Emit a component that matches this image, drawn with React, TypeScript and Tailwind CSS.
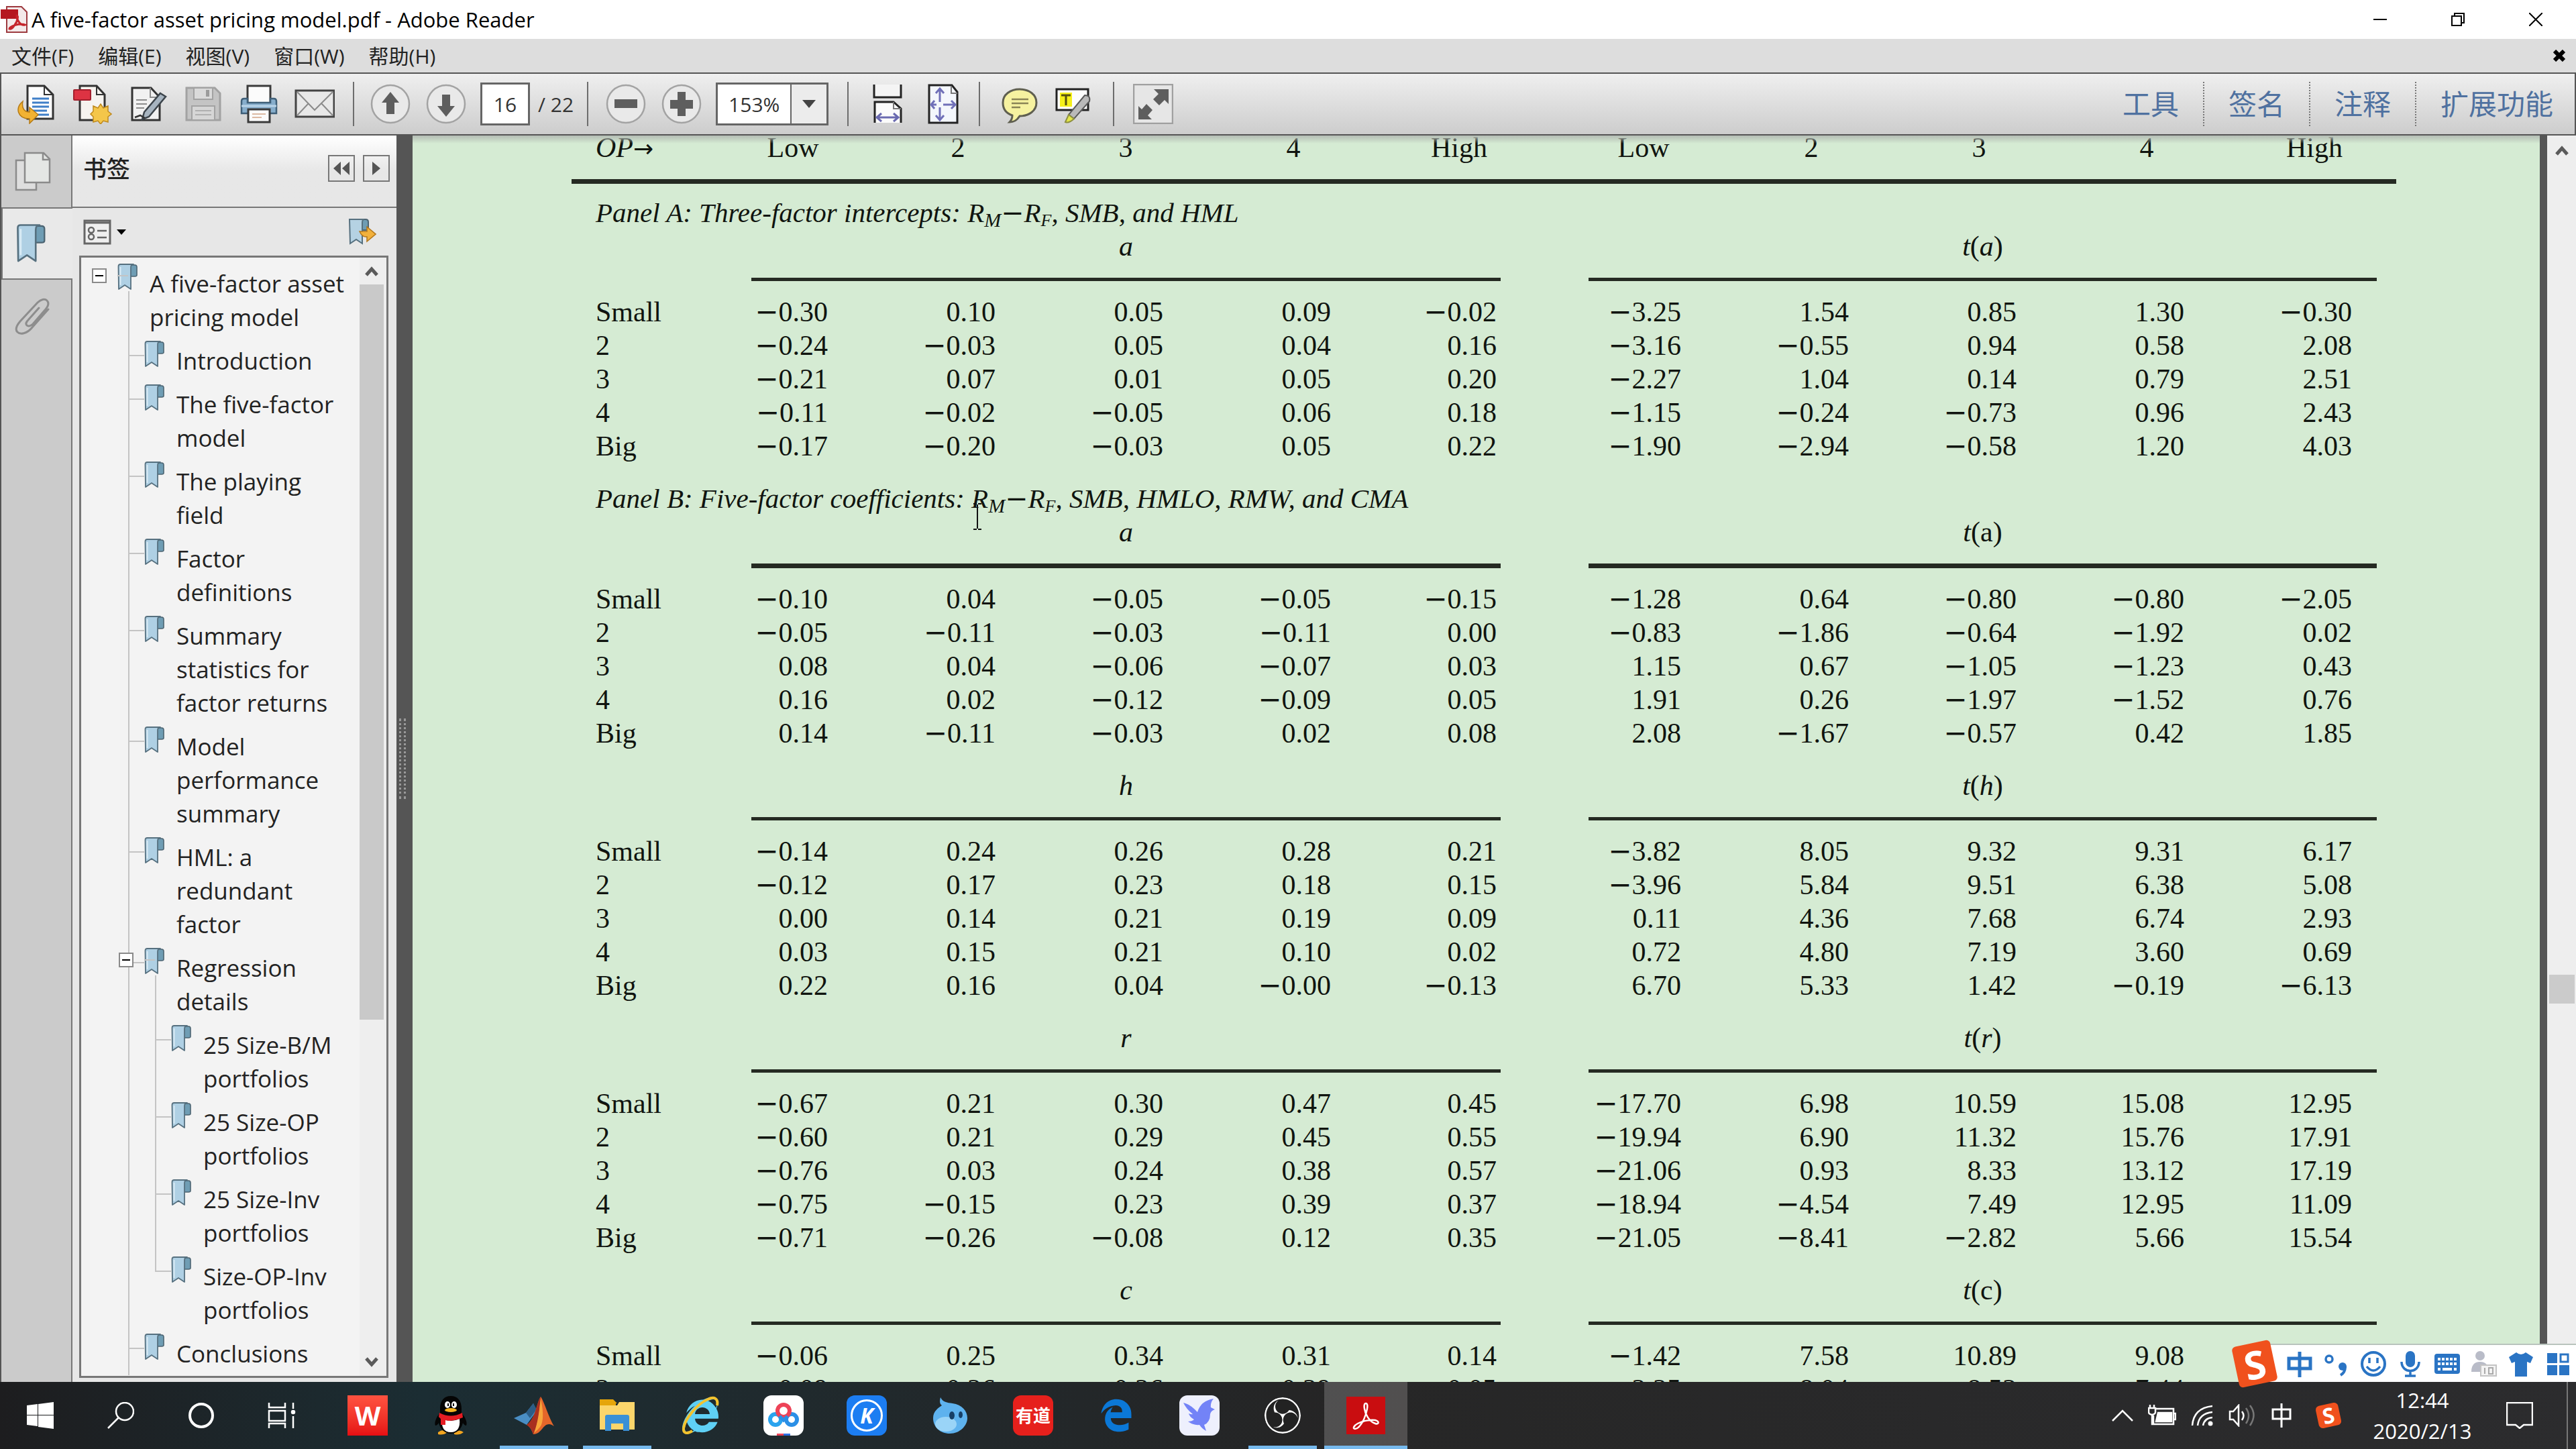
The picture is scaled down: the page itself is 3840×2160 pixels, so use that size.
import type { ReactNode } from "react";
import { FaEdgeLegacy, FaInternetExplorer } from "react-icons/fa";
import { SiObsstudio } from "react-icons/si";

/* ── Data ── */

const menus = ["文件(F)", "编辑(E)", "视图(V)", "窗口(W)", "帮助(H)"];

type Bookmark = { lines: string[]; children?: Bookmark[] };

const bookmarks: Bookmark[] = [
  {
    lines: ["A five-factor asset", "pricing model"],
    children: [
      { lines: ["Introduction"] },
      { lines: ["The five-factor", "model"] },
      { lines: ["The playing", "field"] },
      { lines: ["Factor", "definitions"] },
      { lines: ["Summary", "statistics for", "factor returns"] },
      { lines: ["Model", "performance", "summary"] },
      { lines: ["HML: a", "redundant", "factor"] },
      {
        lines: ["Regression", "details"],
        children: [
          { lines: ["25 Size-B/M", "portfolios"] },
          { lines: ["25 Size-OP", "portfolios"] },
          { lines: ["25 Size-Inv", "portfolios"] },
          { lines: ["Size-OP-Inv", "portfolios"] },
        ],
      },
      { lines: ["Conclusions"] },
    ],
  },
];

type Group = { left: ReactNode; right: ReactNode; thick?: boolean; rows: string[] };

const panelA: Group[] = [
  {
    left: <i>a</i>,
    right: <><i>t</i>(<i>a</i>)</>,
    rows: [
      "Small -0.30 0.10 0.05 0.09 -0.02 -3.25 1.54 0.85 1.30 -0.30",
      "2 -0.24 -0.03 0.05 0.04 0.16 -3.16 -0.55 0.94 0.58 2.08",
      "3 -0.21 0.07 0.01 0.05 0.20 -2.27 1.04 0.14 0.79 2.51",
      "4 -0.11 -0.02 -0.05 0.06 0.18 -1.15 -0.24 -0.73 0.96 2.43",
      "Big -0.17 -0.20 -0.03 0.05 0.22 -1.90 -2.94 -0.58 1.20 4.03",
    ],
  },
];

const panelB: Group[] = [
  {
    left: <i>a</i>,
    right: <><i>t</i>(a)</>,
    thick: true,
    rows: [
      "Small -0.10 0.04 -0.05 -0.05 -0.15 -1.28 0.64 -0.80 -0.80 -2.05",
      "2 -0.05 -0.11 -0.03 -0.11 0.00 -0.83 -1.86 -0.64 -1.92 0.02",
      "3 0.08 0.04 -0.06 -0.07 0.03 1.15 0.67 -1.05 -1.23 0.43",
      "4 0.16 0.02 -0.12 -0.09 0.05 1.91 0.26 -1.97 -1.52 0.76",
      "Big 0.14 -0.11 -0.03 0.02 0.08 2.08 -1.67 -0.57 0.42 1.85",
    ],
  },
  {
    left: <i>h</i>,
    right: <><i>t</i>(<i>h</i>)</>,
    rows: [
      "Small -0.14 0.24 0.26 0.28 0.21 -3.82 8.05 9.32 9.31 6.17",
      "2 -0.12 0.17 0.23 0.18 0.15 -3.96 5.84 9.51 6.38 5.08",
      "3 0.00 0.14 0.21 0.19 0.09 0.11 4.36 7.68 6.74 2.93",
      "4 0.03 0.15 0.21 0.10 0.02 0.72 4.80 7.19 3.60 0.69",
      "Big 0.22 0.16 0.04 -0.00 -0.13 6.70 5.33 1.42 -0.19 -6.13",
    ],
  },
  {
    left: <i>r</i>,
    right: <><i>t</i>(<i>r</i>)</>,
    rows: [
      "Small -0.67 0.21 0.30 0.47 0.45 -17.70 6.98 10.59 15.08 12.95",
      "2 -0.60 0.21 0.29 0.45 0.55 -19.94 6.90 11.32 15.76 17.91",
      "3 -0.76 0.03 0.24 0.38 0.57 -21.06 0.93 8.33 13.12 17.19",
      "4 -0.75 -0.15 0.23 0.39 0.37 -18.94 -4.54 7.49 12.95 11.09",
      "Big -0.71 -0.26 -0.08 0.12 0.35 -21.05 -8.41 -2.82 5.66 15.54",
    ],
  },
  {
    left: <i>c</i>,
    right: <><i>t</i>(c)</>,
    rows: [
      "Small -0.06 0.25 0.34 0.31 0.14 -1.42 7.58 10.89 9.08",
      "2 -0.09 0.26 0.26 0.29 0.05 -2.25 8.04 8.53 7.44",
    ],
  },
];

/* ── Small shared pieces ── */

function BookmarkIcon({ className }: { className: string }) {
  return (
    <svg className={className} viewBox="0 0 30 40" fill="none">
      <path d="M17 2h9q3 0 3 3v12q0 2-3 2h-7V5z" fill="#6f9db4" stroke="#4c6472" strokeWidth="1.6" />
      <path d="M1.500 4q0-3 3-3H24q-4 0-4 5v32l-9-6-9 6z" fill="#afd0e4" stroke="#56707f" strokeWidth="1.800" strokeLinejoin="round" />
      <path d="M4.500 5v27" stroke="#d9ebf5" strokeWidth="2" />
    </svg>
  );
}

function Chevron({ up = false }: { up?: boolean }) {
  return (
    <svg className="h-4 w-5" viewBox="0 0 20 16" fill="none" stroke="#5a5a5a" strokeWidth="5">
      <path d={up ? "M2 14l8-9 8 9" : "M2 2l8 9 8-9"} />
    </svg>
  );
}

function SogouMark({ className }: { className: string }) {
  return (
    <span className={`flex shrink-0 -rotate-12 items-center justify-center rounded-md bg-[#f0511d] font-bold text-white ${className}`}>
      S
    </span>
  );
}

const Separator = () => <div className="h-[66px] w-[2px] bg-[#6d6d6d]" />;

/* ── Toolbar ── */

function ToolButton({ label, children }: { label: string; children: ReactNode }) {
  return (
    <button aria-label={label} className="flex h-[80px] w-[83px] items-center justify-center">
      <svg className="h-[60px] w-[60px]" viewBox="0 0 60 60" fill="none">{children}</svg>
    </button>
  );
}

function RoundIcon({ children }: { children: ReactNode }) {
  return (
    <>
      <circle cx="30" cy="30" r="28" fill="#e9e9e9" stroke="#a3a3a3" strokeWidth="2.500" />
      <g fill="#5e5e5e">{children}</g>
    </>
  );
}

function Toolbar() {
  return (
    <div className="flex h-[94px] shrink-0 items-center border-2 border-[#555] bg-linear-to-b from-[#efefef] to-[#cdcdcd] pl-2.5">
      <ToolButton label="打开">
        <path d="M17 3h25l13 13v36H17z" fill="#fdfdfd" stroke="#333" strokeWidth="3" />
        <path d="M42 3v13h13" stroke="#333" strokeWidth="2" />
        <path d="M24 22h25M24 28h25M24 34h25M24 40h22M30 46h19" stroke="#3f7fc8" strokeWidth="3" />
        <path d="M10 26C-2 36 2 52 20 52v7l13-13-13-11v7c-8 0-12-6-10-16z" fill="#f2b233" stroke="#b57a14" strokeWidth="1.500" />
      </ToolButton>
      <ToolButton label="创建 PDF">
        <path d="M12 3h25l12 13v38H12z" fill="#f6f3ef" stroke="#333" strokeWidth="3" />
        <path d="M37 3v13h12" stroke="#333" strokeWidth="2" />
        <rect x="3" y="9" width="25" height="15" rx="1" fill="#dd3343" stroke="#a31f2d" strokeWidth="2" />
        <path d="M43 30l4 6 7-3v8l5 4-5 4v8l-7-2-4 5-4-5-7 2v-8l-4-4 4-4v-8l7 3z" fill="#f4c64a" stroke="#c08a1d" strokeWidth="1.500" />
      </ToolButton>
      <ToolButton label="编辑">
        <path d="M7 6h28l13 14v34H7z" fill="#f1f1f1" stroke="#333" strokeWidth="3" />
        <path d="M34 6v14h13M13 24h16M13 30h16M13 36h12" stroke="#8d8d8d" strokeWidth="2" />
        <path d="M49 14l8 5-25 30-10 4 3-11z" fill="#a7b4c0" stroke="#3c444b" strokeWidth="2.500" />
        <path d="M11 50l8-3 7 4" stroke="#333" strokeWidth="2.500" />
      </ToolButton>
      <ToolButton label="保存">
        <path d="M5 6h42l8 8v40H5z" fill="#c4c4c4" stroke="#a2a2a2" strokeWidth="3" />
        <path d="M16 6h28v17H16z" fill="#dadada" stroke="#a2a2a2" strokeWidth="2" />
        <path d="M34 9h5v10h-5z" fill="#9b9b9b" />
        <path d="M13 33h34v21H13z" fill="#d6d6d6" stroke="#a2a2a2" strokeWidth="2" />
        <path d="M18 40h24M18 46h24" stroke="#b0b0b0" strokeWidth="2" />
      </ToolButton>
      <ToolButton label="打印">
        <path d="M13 3h34v26H13z" fill="#fbfbfb" stroke="#3a3a3a" strokeWidth="3" />
        <path d="M4 26q0-4 4-4h5v6h34v-6h5q4 0 4 4v18H4z" fill="#86adcb" stroke="#3f5f78" strokeWidth="2.500" />
        <path d="M4 33h52" stroke="#b9d4e8" strokeWidth="3" />
        <path d="M14 38h32v19H14z" fill="#fbfbfb" stroke="#3a3a3a" strokeWidth="3" />
        <path d="M20 45h20M20 50h14" stroke="#dcb9a3" strokeWidth="2" />
      </ToolButton>
      <ToolButton label="邮件">
        <path d="M2 10h57v39H2z" fill="#e8e8e8" stroke="#444" strokeWidth="3" />
        <path d="M4 12l26 27 27-27M4 47l17-18M57 47L40 29" stroke="#8b8b8b" strokeWidth="2" />
      </ToolButton>

      <div className="ml-4 mr-3"><Separator /></div>
      <ToolButton label="上一页">
        <RoundIcon><path d="M30 12l13 16h-7v17H24V28h-7z" /></RoundIcon>
      </ToolButton>
      <ToolButton label="下一页">
        <RoundIcon><path d="M30 49l13-16h-7V16H24v17h-7z" /></RoundIcon>
      </ToolButton>
      <label className="ml-2.5 flex items-center gap-3 text-[30px] text-[#333]">
        <input
          aria-label="页码"
          defaultValue="16"
          className="h-[64px] w-[74px] border-[3px] border-[#666] bg-white text-center outline-none"
        />
        <span>/ 22</span>
      </label>

      <div className="ml-5 mr-3.5"><Separator /></div>
      <ToolButton label="缩小">
        <RoundIcon><path d="M13 23h34v13H13z" /></RoundIcon>
      </ToolButton>
      <ToolButton label="放大">
        <RoundIcon><path d="M24 12h12v12h11v13H36v11H24V37H13V24h11z" /></RoundIcon>
      </ToolButton>
      <div className="relative ml-2.5">
        <select
          aria-label="缩放"
          className="h-[64px] w-[168px] appearance-none border-[3px] border-[#666] bg-white pl-4 text-[30px] text-[#333] outline-none"
        >
          <option>153%</option>
        </select>
        <div className="pointer-events-none absolute inset-y-[3px] right-[3px] flex w-[54px] items-center justify-center border-l-2 border-[#666] bg-[#ececec]">
          <svg className="h-3 w-5" viewBox="0 0 20 12"><path d="M0 0h20L10 12z" fill="#444" /></svg>
        </div>
      </div>

      <div className="ml-7 mr-4"><Separator /></div>
      <ToolButton label="适合宽度">
        <path d="M10 1v19h40V1" fill="#f4f4f4" stroke="#222" strokeWidth="3" />
        <path d="M11 58V27h28l11 10v21" fill="#fbfbfb" stroke="#222" strokeWidth="3" />
        <path d="M39 27v10h11" stroke="#777" strokeWidth="2" />
        <path d="M14 50h32M21 44l-7 6 7 6M39 44l7 6-7 6" stroke="#6a6ab0" strokeWidth="3" />
      </ToolButton>
      <ToolButton label="适合页面">
        <path d="M9 2h34l8 10v46H9z" fill="#f4f7fc" stroke="#222" strokeWidth="3" />
        <path d="M42 3v11h9" stroke="#777" strokeWidth="2" />
        <path d="M25 27V7m-6 7l6-7 6 7M25 35v19m-6-7l6 7 6-7M20 31h-9m6-6l-5 6 5 6M30 31h18m-6-6l6 6-6 6" stroke="#7070b8" strokeWidth="3" />
      </ToolButton>

      <div className="ml-3 mr-4"><Separator /></div>
      <ToolButton label="批注">
        <path d="M31 8c14 0 25 8 25 20S45 48 31 48c-5 8-10 9-15 9 3-3 4-6 4-10C11 44 6 37 6 28 6 16 17 8 31 8z" fill="#f6f2a0" stroke="#5f5f50" strokeWidth="3" />
        <path d="M19 23h25M19 29h25M19 35h13" stroke="#8a8456" strokeWidth="2.500" />
      </ToolButton>
      <ToolButton label="高亮">
        <path d="M3 8h47v31H3z" fill="#fdfdfd" stroke="#222" strokeWidth="3" />
        <path d="M8 13h18v21H8z" fill="#f5f01a" />
        <path d="M10 17h14M17 17v15" stroke="#555010" strokeWidth="3" />
        <path d="M45 17q9 0 7 9L29 52l-8-6z" fill="#b9b9b9" stroke="#5a5a5a" strokeWidth="2" />
        <path d="M21 46l8 6q-7 7-13 5z" fill="#e3e64a" stroke="#8e9040" strokeWidth="2" />
      </ToolButton>

      <div className="mx-4"><Separator /></div>
      <ToolButton label="阅读模式">
        <path d="M1 1h58v58H1z" fill="#e6e6e6" stroke="#a0a0a0" strokeWidth="2.500" />
        <path d="M31 8h22v22l-6-6-8 8-9-9 8-8zM8 53h20l-6-6 7-8-9-9-7 8-5-5z" fill="#5e5e5e" />
      </ToolButton>

      <div className="ml-auto flex text-[42px] leading-[66px] text-[#4f71a0]">
        <button className="px-9">工具</button>
        <button className="border-l-2 border-dotted border-[#777] px-9">签名</button>
        <button className="border-l-2 border-dotted border-[#777] px-9">注释</button>
        <button className="border-l-2 border-dotted border-[#777] pl-9 pr-8">扩展功能</button>
      </div>
    </div>
  );
}

/* ── Bookmarks pane ── */

function Tree({ items, nested = false, open = false }: { items: Bookmark[]; nested?: boolean; open?: boolean }) {
  return (
    <ul className={nested ? "ml-4" : "pl-[30px]"}>
      {items.map((item, i) => {
        const last = i === items.length - 1 && !open;
        return (
          <li key={item.lines[0]} className="relative pl-6">
            {nested && (
              <>
                <span className={`absolute left-0 top-0 w-[2px] bg-[#c4c4c4] ${last ? "h-6" : "h-full"}`} />
                <span className="absolute left-0 top-6 h-[2px] w-6 bg-[#c4c4c4]" />
              </>
            )}
            {item.children && (
              <button
                aria-label="折叠"
                className="absolute -left-3.5 top-2.5 z-10 flex h-[22px] w-[22px] items-center justify-center border-2 border-[#8a8a8a] bg-white"
              >
                <span className="h-[2px] w-3 bg-black" />
              </button>
            )}
            <div className="relative flex gap-[18px] pb-[7px] pt-[3px]">
              {item.children && (
                <>
                  <span className="absolute bottom-0 left-4 top-11 w-[2px] bg-[#c4c4c4]" />
                  <span className="absolute left-0 top-5 h-[2px] w-4 bg-[#c4c4c4]" />
                </>
              )}
              <BookmarkIcon className="h-[40px] w-[30px] shrink-0" />
              <a href="#bookmark" className="whitespace-nowrap pt-[5px]">
                {item.lines.map((line) => (
                  <span key={line} className="block">{line}</span>
                ))}
              </a>
            </div>
            {item.children && <Tree items={item.children} nested open={!nested} />}
          </li>
        );
      })}
    </ul>
  );
}

function Sidebar() {
  return (
    <aside className="flex shrink-0">
      <div className="w-[108px] border-l-2 border-[#555] bg-[#cbcbcb]">
        <button aria-label="页面" className="flex h-[107px] w-full items-center border-r-2 border-[#777] pl-5">
          <svg className="h-[60px] w-[54px]" viewBox="0 0 54 60" fill="none" stroke="#8b8b8b" strokeWidth="2.500">
            <path d="M2 13h30v44H2z" fill="#dedede" />
            <path d="M15 2h28l9 9v35H15z" fill="#e4e6e4" />
            <path d="M42 2v10h10" />
          </svg>
        </button>
        <button aria-label="书签" className="flex h-[108px] w-full items-center border-y-2 border-l-2 border-[#777] bg-[#e9e9e9] pl-5">
          <BookmarkIcon className="h-[58px] w-[44px]" />
        </button>
        <div className="h-full border-r-2 border-[#777]">
          <button aria-label="附件" className="flex h-[107px] w-full items-center pl-5">
            <svg className="h-[56px] w-[52px]" viewBox="0 0 52 56" fill="none" stroke="#8d8d8d" strokeWidth="3" strokeLinecap="round">
              <path d="M50 18L26 45c-8 10-18 11-22 7s-1-10 4-16L34 8c5-5 11-6 14-3s2 8-2 13L27 40c-3 3-7 4-9 2s-1-5 2-8l16-18" />
            </svg>
          </button>
        </div>
      </div>

      <div className="flex w-[483px] flex-col bg-[#e7e7e7]">
        <div className="flex h-[108px] shrink-0 items-start justify-between border-b-2 border-[#777] bg-linear-to-b from-white to-[#e7e7e7] to-50% pl-4 pr-2.5 pt-[26px]">
          <h2 className="text-[35px] font-medium leading-[48px] text-[#222]">书签</h2>
          <div className="flex gap-3 pt-[3px]">
            <button aria-label="折叠面板" className="flex h-10 w-10 items-center justify-center border-2 border-[#777]">
              <svg className="h-5 w-6" viewBox="0 0 24 20" fill="#555"><path d="M11 0v20L0 10zM24 0v20L13 10z" /></svg>
            </button>
            <button aria-label="展开" className="flex h-10 w-10 items-center justify-center border-2 border-[#777]">
              <svg className="h-5 w-3" viewBox="0 0 12 20" fill="#555"><path d="M0 0v20l12-10z" /></svg>
            </button>
          </div>
        </div>
        <div className="flex h-[71px] shrink-0 items-center justify-between pl-4 pr-[30px]">
          <button aria-label="选项" className="flex items-center gap-2">
            <svg className="h-[38px] w-[42px]" viewBox="0 0 42 38" fill="none" stroke="#666">
              <path d="M2 2h38v34H2z" fill="#efefef" strokeWidth="3" />
              <path d="M2 5h38" strokeWidth="3" />
              <circle cx="12" cy="16" r="4" strokeWidth="2.500" />
              <circle cx="12" cy="26" r="4" strokeWidth="2.500" />
              <path d="M21 17h14M21 27h14" strokeWidth="2.500" />
            </svg>
            <svg className="h-2 w-3.5" viewBox="0 0 14 8"><path d="M0 0h14L7 8z" /></svg>
          </button>
          <button aria-label="定位书签" className="flex">
            <svg className="h-[42px] w-[42px]" viewBox="0 0 42 42" fill="none">
              <path d="M18 2h8q4 0 4 4v12h-9z" fill="#6f9db4" stroke="#4c6472" strokeWidth="2" />
              <path d="M2 2h22q-3 0-3 5v31l-9-6-9 6z" fill="#b5d2e3" stroke="#56707f" strokeWidth="2" />
              <path d="M17 20h11v-7l13 11-13 11v-7q-7 1-11-8z" fill="#f2b13c" stroke="#b3771b" strokeWidth="1.500" />
            </svg>
          </button>
        </div>
        <div className="mb-1.5 ml-2.5 mr-3 flex min-h-0 flex-1 border-[3px] border-[#777] bg-[#f3f3f3]">
          <div className="min-w-0 flex-1 overflow-hidden pt-1.5 text-[35px] leading-[50px] text-[#222]">
            <Tree items={bookmarks} />
          </div>
          <div className="flex w-[40px] flex-col items-center bg-[#eee] pr-1">
            <div className="flex h-10 items-center"><Chevron up /></div>
            <div className="h-[1096px] w-full bg-[#c9c9c9]" />
            <div className="mt-auto flex h-10 items-center"><Chevron /></div>
          </div>
        </div>
      </div>

      <div className="flex w-6 items-center bg-[#555]">
        <div className="ml-1 h-[120px] w-2.5 border-x-[3px] border-dotted border-[#999]" />
      </div>
    </aside>
  );
}

/* ── Document page ── */

function Rule({ thick = false }: { thick?: boolean }) {
  return <div className={`bg-[#252a22] ${thick ? "h-[7px]" : "h-[5px]"}`} />;
}

const Minus = () => <span className="font-['DejaVu_Serif',serif] not-italic leading-none">−</span>;

function PanelTitle({ first = false, children }: { first?: boolean; children: ReactNode }) {
  return (
    <tr>
      <th colSpan={14} className={`pl-9 text-left text-[41px] font-normal italic leading-[50px] ${first ? "pt-[18px]" : "pt-7"}`}>
        {children}
      </th>
    </tr>
  );
}

function GroupRows({ group, first }: { group: Group; first: boolean }) {
  const pad = first ? "" : "pt-7";
  return (
    <>
      <tr>
        <td />
        <th colSpan={5} className={`pb-[21px] font-normal ${pad}`}>
          <div className="pb-[22px]">{group.left}</div>
          <Rule thick={group.thick} />
        </th>
        <td />
        <th colSpan={6} className={`pb-[21px] font-normal ${pad}`}>
          <div className="pb-[22px]">{group.right}</div>
          <Rule thick={group.thick} />
        </th>
        <td />
      </tr>
      {group.rows.map((row) => {
        const [label, ...values] = row.split(" ");
        const cell = (value: string, i: number) => (
          <td key={i} className="whitespace-nowrap pr-1.5 text-right">
            {value.startsWith("-") && <Minus />}
            {value.replace("-", "")}
          </td>
        );
        return (
          <tr key={row}>
            <th className="pl-9 text-left font-normal">{label}</th>
            {values.slice(0, 5).map(cell)}
            <td />
            {values.slice(5).map(cell)}
          </tr>
        );
      })}
    </>
  );
}

function HeadCells() {
  return ["Low", "2", "3", "4", "High"].map((name) => (
    <th key={name} className="text-right font-normal">
      <span className="inline-block w-[124px] text-center">{name}</span>
    </th>
  ));
}

function Factors({ rest }: { rest: string }) {
  return (
    <>
      R<sub className="text-[30px]">M</sub><Minus />R<sub className="text-[26px]">F</sub>, {rest}
    </>
  );
}

function DocumentPage() {
  return (
    <main className="relative min-w-0 flex-1 overflow-hidden bg-[#d5ebd3] pl-[237px] pr-[214px] font-['Liberation_Serif',serif] text-[42px] leading-[50px] text-[#10140f]">
      <div className="absolute inset-x-0 top-0 h-3 bg-linear-to-b from-[#b4bcb4] to-transparent" />
      <table className="w-full table-fixed border-collapse">
        <colgroup>
          <col className="w-[268px]" />
          <col className="w-[120px]" />
          <col className="w-[250px]" span={3} />
          <col className="w-[247px]" />
          <col className="w-[131px]" />
          <col className="w-[144px]" />
          <col className="w-[250px]" span={4} />
          <col className="w-[31px]" />
          <col className="w-[29px]" />
        </colgroup>
        <thead>
          <tr className="h-[68px] border-b-[7px] border-[#252a22] align-top leading-[36px]">
            <th className="whitespace-nowrap pl-9 text-left font-normal">
              <i>OP</i><span className="font-['DejaVu_Sans',sans-serif] text-[36px] leading-none">→</span>
            </th>
            <HeadCells />
            <td />
            <HeadCells />
            <td />
            <td />
          </tr>
        </thead>
        <tbody>
          <PanelTitle first>Panel A: Three-factor intercepts: <Factors rest="SMB, and HML" /></PanelTitle>
          {panelA.map((group, i) => <GroupRows key={i} group={group} first={i === 0} />)}
          <PanelTitle>Panel B: Five-factor coefficients: <Factors rest="SMB, HMLO, RMW, and CMA" /></PanelTitle>
          {panelB.map((group, i) => <GroupRows key={i} group={group} first={i === 0} />)}
        </tbody>
      </table>
      {/* text cursor */}
      <svg className="absolute left-[835px] top-[548px] h-[40px] w-[14px]" viewBox="0 0 14 40" fill="none" stroke="#111" strokeWidth="2">
        <path d="M1 1h5m2 0h5M7 2v36M1 39h5m2 0h5" />
      </svg>
    </main>
  );
}

/* ── Sogou input bar ── */

function InputBar() {
  return (
    <div className="absolute bottom-[100px] right-0 flex h-[57px] items-center border-t-2 border-[#b9c4bd] bg-white pl-2.5 text-[#2a74c4]">
      <SogouMark className="-ml-[52px] mr-2.5 h-[62px] w-[58px] text-[58px]" />
      <div className="flex">
        {[
          <path d="M4 12h32v15H4zM20 2v38" stroke="currentColor" strokeWidth="5" />,
          <>
            <circle cx="9" cy="13" r="5" stroke="currentColor" strokeWidth="3.500" />
            <circle cx="29" cy="24" r="6" fill="currentColor" />
            <path d="M33 24q0 9-7 13" stroke="currentColor" strokeWidth="4" />
          </>,
          <>
            <circle cx="20" cy="20" r="17" stroke="currentColor" strokeWidth="4" />
            <path d="M14 11v8M26 11v8M10 24q10 12 20 0" stroke="currentColor" strokeWidth="3.500" />
          </>,
          <>
            <rect x="13" y="1" width="14" height="24" rx="7" fill="currentColor" />
            <path d="M7 17c0 18 26 18 26 0M20 30v8M12 38h16" stroke="currentColor" strokeWidth="3.500" />
          </>,
          <>
            <rect x="1" y="5" width="38" height="30" rx="4" fill="currentColor" />
            <path d="M6 13h28M6 20h28" stroke="#fff" strokeWidth="4" strokeDasharray="4 2" />
            <path d="M6 28h4m3 0h14m3 0h4" stroke="#fff" strokeWidth="4" />
          </>,
          <>
            <circle cx="14" cy="8" r="7" fill="#b9bcc8" />
            <path d="M1 32q0-15 13-15 8 0 11 6v9z" fill="#b9bcc8" />
            <path d="M15 22h23v16H15z" fill="#f3f3f3" stroke="#c4c4c4" strokeWidth="2" />
            <path d="M21 26v9M27 26h6v9h-6z" stroke="#aaa" strokeWidth="2" />
          </>,
          <path d="M13 3q7 6 14 0l11 7-4 9-5-2v22H11V17l-5 2-4-9z" fill="currentColor" />,
          <>
            <path d="M4 4h15v15H4zM4 22h15v15H4zM22 22h15v15H22z" fill="currentColor" />
            <path d="M24 6h11v11H24z" stroke="currentColor" strokeWidth="3" />
          </>,
        ].map((icon, i) => (
          <button key={i} aria-label="输入法" className="flex w-[55px] items-center justify-center">
            <svg className="h-[40px] w-[40px]" viewBox="0 0 40 40" fill="none">{icon}</svg>
          </button>
        ))}
      </div>
    </div>
  );
}

/* ── Taskbar ── */

function TaskIcon({ label, wide = false, state, children }: { label: string; wide?: boolean; state?: "open" | "active"; children: ReactNode }) {
  return (
    <button
      aria-label={label}
      className={`relative flex h-full items-center justify-center ${wide ? "w-[124px]" : "w-[120px]"} ${state === "active" ? "bg-white/20" : ""}`}
    >
      {children}
      {state && (
        <span className={`absolute bottom-0 h-[5px] bg-[#76b9ed] ${state === "active" ? "inset-x-0" : "inset-x-[11px]"}`} />
      )}
    </button>
  );
}

function Taskbar() {
  return (
    <footer className="flex h-[100px] shrink-0 items-center bg-linear-to-r from-[#1d1d1f] via-[#262626] to-[#2c2c2e] text-white">
      <div className="flex h-full bg-linear-to-r from-[#1d1d1f] via-[#1b2d33] via-30% to-[#262424]">
        <TaskIcon label="开始">
          <svg className="h-[40px] w-[40px]" viewBox="0 0 40 40" fill="#fff">
            <path d="M0 5l16-2v16H0zM17 3l23-3v19H17zM0 20h16v16L0 34zM17 20h23v20l-23-3z" />
          </svg>
        </TaskIcon>
        <TaskIcon label="搜索">
          <svg className="h-[40px] w-[40px]" viewBox="0 0 40 40" fill="none" stroke="#fff" strokeWidth="2.500">
            <circle cx="26" cy="14" r="13" />
            <path d="M17 23L1 39" />
          </svg>
        </TaskIcon>
        <TaskIcon label="Cortana">
          <span className="h-[38px] w-[38px] rounded-full border-4 border-white" />
        </TaskIcon>
        <TaskIcon label="任务视图">
          <svg className="h-[40px] w-[42px]" viewBox="0 0 42 40" fill="none" stroke="#fff" strokeWidth="2.500">
            <path d="M2 1v7h24V1M2 13h24v15H2zM2 39v-7h24v7M38 1v9M38 21v18" />
            <circle cx="38" cy="15" r="2" fill="#fff" />
          </svg>
        </TaskIcon>
        <div className="w-1.5" />
        <TaskIcon label="WPS" wide>
          <span className="flex h-[60px] w-[60px] items-center justify-center bg-linear-to-b from-[#ff5240] to-[#e60c12] text-[40px] font-bold">W</span>
        </TaskIcon>
        <TaskIcon label="QQ" wide>
          <svg className="h-[58px] w-[50px]" viewBox="0 0 50 58">
            <path d="M6 54q8-6 14 0-6 5-14 3zM30 54q8-5 14 0-6 5-14 3z" fill="#f2a51f" />
            <path d="M25 0c10 0 16 7 16 19v6c6 7 9 15 7 19-2 0-4-2-5-4-2 9-9 16-18 16S9 49 7 40c-1 2-3 4-5 4-2-4 1-12 7-19v-6C9 7 15 0 25 0z" fill="#050505" />
            <path d="M12 34q13 6 26 0 2 20-13 20T12 34z" fill="#fff" />
            <ellipse cx="20" cy="13" rx="4" ry="5" fill="#fff" />
            <ellipse cx="30" cy="13" rx="4" ry="5" fill="#fff" />
            <path d="M21 11v4M29 11v4" stroke="#000" strokeWidth="2" />
            <ellipse cx="25" cy="21" rx="9" ry="3" fill="#f5b21f" />
            <path d="M8 25q17 9 34 0l1 7q-17 7-26 4v7h-7v-9l-3-3z" fill="#e51c23" />
          </svg>
        </TaskIcon>
        <TaskIcon label="MATLAB" wide state="open">
          <svg className="h-[56px] w-[60px]" viewBox="0 0 60 56">
            <path d="M0 32l18-8 11-14 5 11-15 21z" fill="#4a8ec4" />
            <path d="M18 24l11-14 5 9-10 13z" fill="#2c5d86" />
            <path d="M40 0c5 7 12 31 20 44-8-6-13-2-17 3-4 5-8 9-14 9-3-8-6-12-10-14 13-7 15-34 21-42z" fill="#e4662a" />
            <path d="M40 0c-2 20-3 40-11 56-3-8-6-12-10-14 13-7 15-34 21-42z" fill="#a8301f" />
            <path d="M40 3c3 14 5 28 1 39-2 4-7 9-11 12 6-15 8-34 10-51z" fill="#f7a63b" />
          </svg>
        </TaskIcon>
        <TaskIcon label="文件资源管理器" wide state="open">
          <svg className="h-[50px] w-[54px]" viewBox="0 0 54 50">
            <path d="M1 1h20l6 6h-2v8H1z" fill="#e5a50b" />
            <path d="M1 10h26l3-5h23v41H1z" fill="#fbd56b" />
            <path d="M9 48V27q0-3 3-3h30q3 0 3 3v21h-9V37H18v11z" fill="#3a90d6" />
            <path d="M18 37h18v9H18z" fill="#fbd56b" />
          </svg>
        </TaskIcon>
        <TaskIcon label="Internet Explorer" wide>
          <FaInternetExplorer className="h-[54px] w-[54px] text-[#5fd0f5]" />
          <svg className="absolute h-[58px] w-[58px]" viewBox="0 0 58 58" fill="none" stroke="#f2c22e" strokeWidth="4">
            <path d="M54 14C56 4 50 0 40 5 24 12 6 34 4 48c-1 8 5 9 13 4" />
          </svg>
        </TaskIcon>
        <TaskIcon label="百度网盘" wide>
          <svg className="h-[60px] w-[60px]" viewBox="0 0 60 60" fill="none">
            <rect width="60" height="60" rx="12" fill="#fff" />
            <circle cx="18" cy="36" r="8" stroke="#2aa3ee" strokeWidth="6" />
            <circle cx="42" cy="36" r="8" stroke="#2a8fe6" strokeWidth="6" />
            <circle cx="30" cy="23" r="9" stroke="#ee4358" strokeWidth="6" />
            <path d="M24 31l6 6 6-6" stroke="#2a8fe6" strokeWidth="5" />
            <path d="M20 57h10v3H20z" fill="#ee4358" />
            <path d="M30 57h10v3H30z" fill="#2f6fe0" />
          </svg>
        </TaskIcon>
        <TaskIcon label="酷狗音乐" wide>
          <span className="flex h-[60px] w-[60px] items-center justify-center rounded-xl bg-[#1c7df2]">
            <span className="flex h-[48px] w-[48px] items-center justify-center rounded-full border-[3px] border-white text-[32px] font-bold italic">K</span>
          </span>
        </TaskIcon>
        <TaskIcon label="水滴" wide>
          <svg className="h-[54px] w-[52px]" viewBox="0 0 52 54">
            <path d="M12 0c3 7 10 8 18 9 14 2 22 11 22 22S41 54 26 54 1 44 1 31C1 20 9 16 14 12 10 9 11 4 12 0z" fill="#5eb2ee" />
            <ellipse cx="20" cy="40" rx="16" ry="11" fill="#b4e2fb" opacity=".7" />
            <ellipse cx="29" cy="27" rx="4" ry="6" fill="#173f66" />
            <ellipse cx="42" cy="26" rx="3" ry="5" fill="#173f66" />
          </svg>
        </TaskIcon>
        <TaskIcon label="有道" wide>
          <span className="flex h-[60px] w-[60px] items-center justify-center rounded-xl bg-[#e6201c] text-[26px] font-bold">有道</span>
        </TaskIcon>
        <TaskIcon label="Edge" wide>
          <FaEdgeLegacy className="h-[54px] w-[50px] text-[#0b78d7]" />
        </TaskIcon>
        <TaskIcon label="飞鸟" wide>
          <svg className="h-[60px] w-[60px]" viewBox="0 0 60 60">
            <rect width="60" height="60" rx="12" fill="#eef0fd" />
            <path d="M6 11q10 2 21 14Q32 8 51 5q-5 6-4 13l6 3q-6 2-7 7 0 12-9 16l3 9q-6-3-10-9-9 1-17-5 6 0 9-3-7-4-8-9 4 2 6 1Q10 20 6 11z" fill="#7383f7" />
          </svg>
        </TaskIcon>
        <TaskIcon label="OBS" wide state="open">
          <SiObsstudio className="h-[54px] w-[54px] rounded-full bg-[#222] text-white" />
        </TaskIcon>
        <TaskIcon label="Adobe Reader" wide state="active">
          <svg className="h-[56px] w-[58px]" viewBox="0 0 58 56" fill="none">
            <rect width="58" height="56" fill="#c90d10" />
            <path d="M29 10c5 0 1 15-3 24-4 8-9 14-13 14s-2-5 4-8c8-4 19-6 26-5 7 2 5 7 0 5-9-3-15-14-16-22-1-5 0-8 2-8z" stroke="#fff" strokeWidth="2.500" />
          </svg>
        </TaskIcon>
      </div>

      <div className="ml-auto flex items-center">
        <div className="flex items-center gap-[22px] pr-[46px]">
          <svg className="h-[18px] w-[32px]" viewBox="0 0 32 18" fill="none" stroke="#fff" strokeWidth="2.500"><path d="M1 17L16 2l15 15" /></svg>
          <svg className="h-[32px] w-[42px]" viewBox="0 0 42 32" fill="none" stroke="#fff" strokeWidth="2.500">
            <path d="M12 6h26v23H8V16M39 13h2v9h-2M3 0v5m6-5v5M1 5h10v6q0 3-5 4-5-1-5-4zM6 15v14h4" />
            <path d="M15 12h20v13H12z" fill="#fff" />
          </svg>
          <svg className="h-[32px] w-[34px]" viewBox="0 0 34 32" fill="none" stroke="#fff" strokeWidth="2.500">
            <path d="M2 31Q4 5 32 2M10 31q2-18 22-20M18 31q2-11 14-12" />
            <circle cx="29" cy="28" r="3.500" fill="#fff" stroke="none" />
          </svg>
          <svg className="h-[34px] w-[42px]" viewBox="0 0 42 34" fill="none" stroke="#fff" strokeWidth="2.500">
            <path d="M2 11h5l8-9v30l-8-9H2zM20 11q5 6 0 13" />
            <path d="M26 6q8 11 0 23M32 2q11 14 0 30" stroke="#777" />
          </svg>
          <svg className="h-[36px] w-[30px]" viewBox="0 0 30 36" fill="none" stroke="#fff" strokeWidth="3">
            <path d="M2 9h26v14H2zM15 0v36" />
          </svg>
          <SogouMark className="ml-4 h-[34px] w-[34px] text-[32px]" />
        </div>
        <div className="w-[154px] text-center text-[31px] leading-[46px]">
          <div>12:44</div>
          <div>2020/2/13</div>
        </div>
        <button aria-label="通知" className="ml-[48px] mr-[50px]">
          <svg className="h-[40px] w-[40px]" viewBox="0 0 40 40" fill="none" stroke="#fff" strokeWidth="2.500"><path d="M1 1h38v33H26l-6 5-6-5H1z" /></svg>
        </button>
        <div className="mr-3 h-[100px] w-[2px] bg-[#777]" />
      </div>
    </footer>
  );
}

export default function App() {
  return (
    <div className="relative flex h-screen flex-col overflow-hidden bg-white font-['Open_Sans','Noto_Sans_CJK_SC',sans-serif]">
      {/* ── Title bar ── */}
      <header className="flex h-[58px] shrink-0 items-center justify-between pr-[50px]">
        <div className="flex items-center gap-1.5 text-[31px] text-black">
          <svg className="h-[40px] w-[41px]" viewBox="0 0 41 40" fill="none">
            <path d="M10 1h22l8 8v30H10z" fill="#f3e9e9" stroke="#9d3a3f" strokeWidth="2" />
            <path d="M1 5h26v14H1z" fill="#b5171f" />
            <path d="M25 14c3 0 1 9-3 14-3 5-6 7-8 6 0-4 16-9 23-6-6 2-13-8-12-14z" stroke="#c5242b" strokeWidth="3" />
          </svg>
          A five-factor asset pricing model.pdf - Adobe Reader
        </div>
        <div className="flex gap-24">
          <button aria-label="最小化" className="flex w-5 items-center"><span className="h-[2px] w-5 bg-black" /></button>
          <button aria-label="还原">
            <svg className="h-5 w-5" viewBox="0 0 20 20" fill="none" stroke="#000" strokeWidth="2"><path d="M1 5h14v14H1zM5 5V1h14v14h-4" /></svg>
          </button>
          <button aria-label="关闭">
            <svg className="h-5 w-5" viewBox="0 0 20 20" fill="none" stroke="#000" strokeWidth="2"><path d="M0 0l20 20M20 0L0 20" /></svg>
          </button>
        </div>
      </header>

      {/* ── Menu bar ── */}
      <nav className="flex h-[50px] shrink-0 items-center bg-[#dddddd] pl-[17px] pr-[16px] text-[30px] text-[#222]">
        <div className="flex gap-9">
          {menus.map((name) => <button key={name}>{name}</button>)}
        </div>
        <button aria-label="关闭文档" className="ml-auto">
          <svg className="h-[18px] w-[18px]" viewBox="0 0 18 18" stroke="#000" strokeWidth="6"><path d="M2 2l14 14M16 2L2 16" /></svg>
        </button>
      </nav>

      <Toolbar />

      <div className="flex min-h-0 flex-1">
        <Sidebar />
        <DocumentPage />
        <div className="flex w-[54px] flex-col items-center border-l-[11px] border-[#555] bg-[#eee]">
          <div className="flex h-11 items-center"><Chevron up /></div>
          <div className="mt-[1207px] h-[43px] w-[38px] bg-[#cbcbcb]" />
        </div>
      </div>

      <Taskbar />
      <InputBar />
    </div>
  );
}
